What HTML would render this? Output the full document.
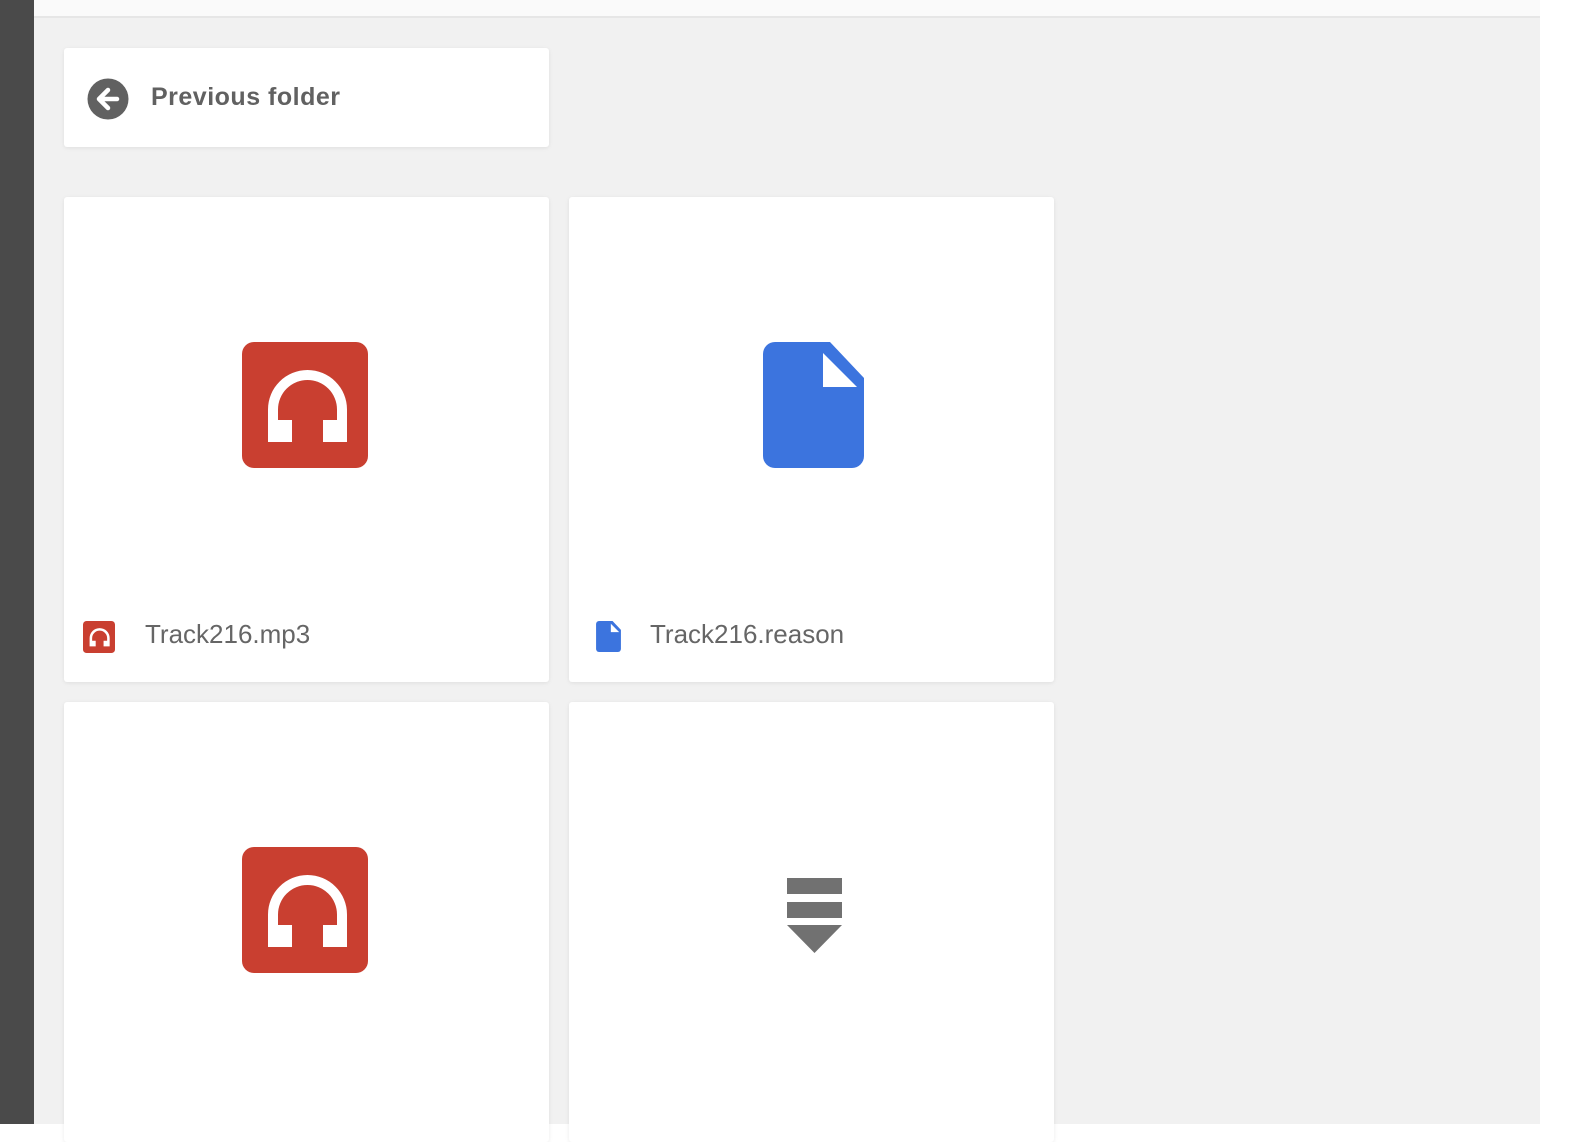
<!DOCTYPE html>
<html><head><style>
html,body{margin:0;padding:0;}
body{width:1576px;height:1124px;background:#fff;position:relative;overflow:hidden;font-family:"Liberation Sans",sans-serif;}
.side{position:absolute;left:0;top:0;width:34px;height:1124px;background:#4a4a4a;}
.main{position:absolute;left:34px;top:0;width:1506px;height:1124px;background:#f1f1f1;}
.hdr{position:absolute;left:34px;top:0;width:1506px;height:16px;background:#fafafa;border-bottom:2px solid #e6e6e6;}
.card{position:absolute;background:#fff;border-radius:3px;box-shadow:0 1px 4px rgba(0,0,0,0.08);}
.lbl{position:absolute;font-size:26px;color:#666;white-space:nowrap;}
svg{position:absolute;}
</style></head><body>
<div class="side"></div>
<div class="main"></div>
<div class="hdr"></div>

<div class="card" style="left:64px;top:48px;width:485px;height:99px;">
  <svg style="left:23px;top:30px" width="42" height="42" viewBox="0 0 42 42">
    <circle cx="21" cy="21" r="20.5" fill="#616161"/>
    <path d="M30 21H13M21 12l-9 9 9 9" stroke="#fff" stroke-width="4.5" fill="none" stroke-linecap="round" stroke-linejoin="round"/>
  </svg>
  <div class="lbl" style="left:87px;top:35px;font-weight:bold;color:#616161;font-size:25px;letter-spacing:0.5px;">Previous folder</div>
</div>

<div class="card" style="left:64px;top:197px;width:485px;height:485px;">
  <svg style="left:178px;top:145px" width="126" height="126" viewBox="0 0 126 126">
    <rect width="126" height="126" rx="12" fill="#c93f30"/>
    <path d="M26 100V67.5A39.5 39.5 0 0 1 105 67.5V100H81V78H95V67.5A29.5 29.5 0 0 0 36 67.5V78H50V100Z" fill="#fff"/>
  </svg>
  <svg style="left:19px;top:424px" width="32" height="32" viewBox="0 0 126 126">
    <rect width="126" height="126" rx="14" fill="#c93f30"/>
    <path d="M26 100V67.5A39.5 39.5 0 0 1 105 67.5V100H81V78H95V67.5A29.5 29.5 0 0 0 36 67.5V78H50V100Z" fill="#fff"/>
  </svg>
  <div class="lbl" style="left:81px;top:422px;">Track216.mp3</div>
</div>

<div class="card" style="left:569px;top:197px;width:485px;height:485px;">
  <svg style="left:194px;top:145px" width="101" height="126" viewBox="0 0 101 126">
    <path d="M12 0H67L101 36V114a12 12 0 0 1-12 12H12A12 12 0 0 1 0 114V12A12 12 0 0 1 12 0Z" fill="#3c74de"/>
    <path d="M60 11V45H94Z" fill="#fff"/>
  </svg>
  <svg style="left:27px;top:424px" width="25" height="31" viewBox="0 0 101 126">
    <path d="M12 0H67L101 36V114a12 12 0 0 1-12 12H12A12 12 0 0 1 0 114V12A12 12 0 0 1 12 0Z" fill="#3c74de"/>
    <path d="M60 11V45H94Z" fill="#fff"/>
  </svg>
  <div class="lbl" style="left:81px;top:422px;">Track216.reason</div>
</div>

<div class="card" style="left:64px;top:702px;width:485px;height:440px;">
  <svg style="left:178px;top:145px" width="126" height="126" viewBox="0 0 126 126">
    <rect width="126" height="126" rx="12" fill="#c93f30"/>
    <path d="M26 100V67.5A39.5 39.5 0 0 1 105 67.5V100H81V78H95V67.5A29.5 29.5 0 0 0 36 67.5V78H50V100Z" fill="#fff"/>
  </svg>
</div>

<div class="card" style="left:569px;top:702px;width:485px;height:440px;">
  <svg style="left:218px;top:176px" width="55" height="76" viewBox="0 0 55 76">
    <rect x="0" y="0" width="55" height="16" fill="#717171"/>
    <rect x="0" y="24" width="55" height="16" fill="#717171"/>
    <path d="M0 47H55L27.5 75Z" fill="#717171"/>
  </svg>
</div>
</body></html>
